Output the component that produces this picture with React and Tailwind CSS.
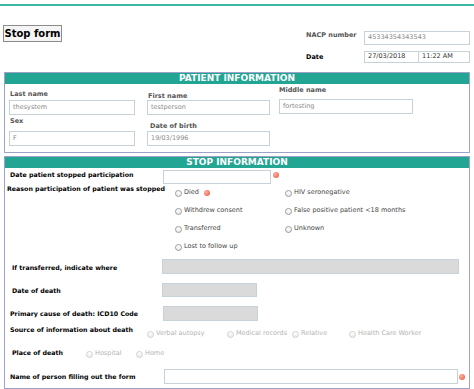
import React from "react";

const teal = "bg-[#22a693]";

const Box = ({ value = "", className = "" }) => (
  <div
    className={`flex items-center border border-[#c6d2d7] pl-[3px] text-[6.5px] text-[#8a8a8a] ${className}`}
  >
    {value}
  </div>
);

const Dot = () => (
  <span className="inline-block h-[6px] w-[6px] rounded-full bg-[radial-gradient(circle_at_35%_35%,#ffb19e,#e4513c)]" />
);

const Radio = ({ label, disabled, dot, className = "" }) => (
  <div className={`flex items-center gap-[2px] ${className}`}>
    <span
      className={`inline-block h-[7px] w-[7px] rounded-full border bg-[linear-gradient(#ffffff,#ececec)] ${
        disabled ? "border-[#d0d0d0]" : "border-[#9a9a9a]"
      }`}
    />
    <span className={`text-[6.5px] ${disabled ? "text-[#b4b4b4]" : "text-[#444]"}`}>{label}</span>
    {dot && (
      <span className="ml-[3px] flex">
        <Dot />
      </span>
    )}
  </div>
);

const PanelHead = ({ children }) => (
  <div className={`${teal} flex h-[11px] items-center justify-center text-[9px] font-bold leading-none text-white`}>
    {children}
  </div>
);

const Label = ({ children, className = "" }) => (
  <div className={`text-[6.3px] font-bold leading-[8px] text-black ${className}`}>{children}</div>
);

export default function App() {
  return (
    <div className="h-[389px] w-[474px] overflow-hidden bg-white font-['DejaVu_Sans',sans-serif]">
      {/* top line */}
      <div className="h-[4px]" />
      <div className="h-[2px] bg-[#3cb8a6]" />

      {/* title + nacp */}
      <div className="flex h-[66px]">
        <div className="ml-[3px] mt-[19px] flex h-[17px] w-[59px] items-center justify-center border border-[#8c8c8c] bg-[#f5f5f5] text-[10px] font-bold leading-none text-black">
          Stop form
        </div>
        <div className="ml-[244px] flex flex-col">
          <div className="mt-[25px] flex">
            <div className="w-[58px] text-[6.5px] font-bold leading-[8px] text-[#555]">NACP number</div>
            <Box value="45334354343543" className="w-[106px] h-[14px]" />
          </div>
          <div className="mt-[6px] flex items-center">
            <div className="w-[58px] text-[6.5px] font-bold leading-[8px] text-black">Date</div>
            <Box value="27/03/2018" className="h-[12px] w-[55px] text-[#333]" />
            <Box value="11:22 AM" className="h-[12px] w-[51px] border-l-0 text-[#333]" />
          </div>
        </div>
      </div>

      {/* patient information */}
      <div className="mx-[4px] h-[81px] w-[466px] border border-[#9ea2c9]">
        <PanelHead>PATIENT INFORMATION</PanelHead>
        <div className="flex pl-[4px]">
          <div className="flex w-[126px] flex-col">
            <div className="ml-[1px] mt-[6px] text-[6.5px] font-bold leading-[8px] text-[#555]">Last name</div>
            <Box value="thesystem" className="mt-[2px] h-[15px]" />
            <div className="ml-[1px] mt-[2px] text-[6.5px] font-bold leading-[8px] text-[#555]">Sex</div>
            <Box value="F" className="mt-[6px] h-[15px]" />
          </div>
          <div className="ml-[12px] flex w-[123px] flex-col">
            <div className="ml-[1px] mt-[8px] text-[6.5px] font-bold leading-[8px] text-[#555]">First name</div>
            <Box value="testperson" className="h-[15px]" />
            <div className="ml-[3px] mt-[7px] text-[6.5px] font-bold leading-[8px] text-[#555]">Date of birth</div>
            <Box value="19/03/1996" className="mt-[1px] h-[15px]" />
          </div>
          <div className="ml-[9px] flex w-[134px] flex-col">
            <div className="mt-[2px] text-[6.5px] font-bold leading-[8px] text-[#555]">Middle name</div>
            <Box value="fortesting" className="mt-[5px] h-[15px]" />
          </div>
        </div>
      </div>

      {/* stop information */}
      <div className="mx-[4px] mt-[3px] w-[466px] border border-[#9ea2c9] pb-[4px]">
        <PanelHead>STOP INFORMATION</PanelHead>

        <div className="flex h-[16px]">
          <Label className="w-[158px] pl-[5px] pt-[3px]">Date patient stopped participation</Label>
          <Box className="mt-[2px] h-[14px] w-[108px]" />
          <span className="ml-[2px] mt-[4px] flex">
            <Dot />
          </span>
        </div>

        <div className="flex">
          <Label className="w-[170px] pl-[2px] pt-[1px]">Reason participation of patient was stopped</Label>
          <div className="grid grid-cols-[110px_1fr] auto-rows-[18px]">
            <Radio label="Died" dot />
            <Radio label="HIV seronegative" />
            <Radio label="Withdrew consent" />
            <Radio label="False positive patient <18 months" />
            <Radio label="Transferred" />
            <Radio label="Unknown" />
            <Radio label="Lost to follow up" />
          </div>
        </div>

        <div className="mt-[3px] flex items-center">
          <Label className="w-[157px] pl-[7px] pt-[3px]">If transferred, indicate where</Label>
          <Box className="h-[15px] w-[297px] border-[#bcc7c7] bg-[#dadada]" />
        </div>

        <div className="mt-[9px] flex items-center">
          <Label className="w-[157px] pl-[7px] pt-[2px]">Date of death</Label>
          <Box className="h-[14px] w-[95px] border-[#bcc7c7] bg-[#dadada]" />
        </div>

        <div className="mt-[9px] flex items-center">
          <Label className="w-[158px] pl-[5px]">Primary cause of death: ICD10 Code</Label>
          <Box className="h-[15px] w-[95px] border-[#bcc7c7] bg-[#dadada]" />
        </div>

        <div className="mt-[5px] flex">
          <Label className="w-[142px] pl-[5px]">Source of information about death</Label>
          <div className="mt-[4px] flex h-[8px]">
            <Radio label="Verbal autopsy" disabled className="w-[80px]" />
            <Radio label="Medical records" disabled className="w-[65px]" />
            <Radio label="Relative" disabled className="w-[57px]" />
            <Radio label="Health Care Worker" disabled />
          </div>
        </div>

        <div className="mt-[11px] flex">
          <Label className="w-[81px] pl-[7px]">Place of death</Label>
          <div className="mt-[1px] flex h-[8px]">
            <Radio label="Hospital" disabled className="w-[50px]" />
            <Radio label="Home" disabled />
          </div>
        </div>

        <div className="mt-[11px] flex items-center">
          <Label className="w-[159px] pl-[5px]">Name of person filling out the form</Label>
          <Box className="h-[15px] w-[294px]" />
          <span className="ml-[1px] flex">
            <Dot />
          </span>
        </div>
      </div>
    </div>
  );
}
